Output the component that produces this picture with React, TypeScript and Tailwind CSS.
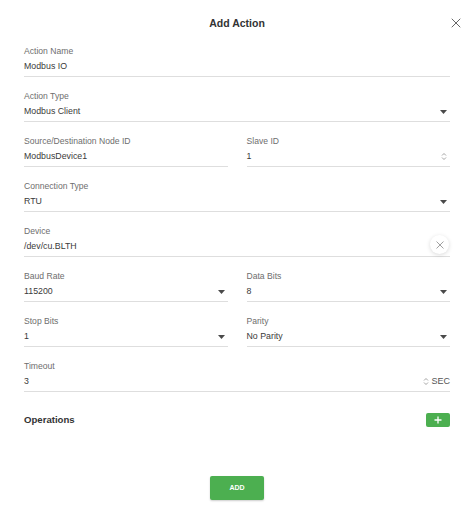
import React from 'react'

const Caret = () => (
	<svg width="7" height="4" viewBox="0 0 7 4" className="shrink-0">
		<path d="M0 0 L7 0 L3.5 4 Z" fill="#4a4a4a" />
	</svg>
)

const Spinner = () => (
	<svg width="6" height="9" viewBox="0 0 6 9" className="shrink-0">
		<path d="M1 3.5 L3 1.5 L5 3.5" stroke="#9a9a9a" strokeWidth="0.9" fill="none" />
		<path d="M1 5.5 L3 7.5 L5 5.5" stroke="#9a9a9a" strokeWidth="0.9" fill="none" />
	</svg>
)

const XIcon = ({ size, color, width }: { size: number; color: string; width: number }) => (
	<svg width={size} height={size} viewBox="0 0 10 10">
		<path d="M1 1 L9 9 M9 1 L1 9" stroke={color} strokeWidth={width} strokeLinecap="round" />
	</svg>
)

interface FieldProps {
	label: string
	value: string
	right?: React.ReactNode
}

const Field = ({ label, value, right }: FieldProps) => (
	<div className="flex flex-col min-w-0">
		<div className="h-[12px] leading-[12px] text-[8.6px] text-[#6e6e6e]">{label}</div>
		<div className="h-[20px] flex items-center justify-between border-b border-[#dedede] pr-[3px]">
			<span className="text-[8.8px] text-[#3a3a3a]">{value}</span>
			{right}
		</div>
	</div>
)

export default function App() {
	return (
		<div
			className="w-[474px] h-[514px] bg-white px-[24px] pt-[16px] relative"
			style={{ fontFamily: '"Liberation Sans", Arial, sans-serif' }}
		>
			<div className="relative mb-[15px]">
				<div className="text-center font-bold text-[10.5px] leading-[14px] text-[#333]">Add Action</div>
				<div className="absolute right-[-11px] top-[2px]">
					<XIcon size={10} color="#666" width={1} />
				</div>
			</div>

			<div className="flex flex-col gap-[13px]">
				<Field label="Action Name" value="Modbus IO" />
				<Field label="Action Type" value="Modbus Client" right={<Caret />} />
				<div className="grid grid-cols-2 gap-[19px]">
					<Field label="Source/Destination Node ID" value="ModbusDevice1" />
					<Field label="Slave ID" value="1" right={<Spinner />} />
				</div>
				<Field label="Connection Type" value="RTU" right={<Caret />} />
				<Field
					label="Device"
					value="/dev/cu.BLTH"
					right={
						<div className="w-[19px] h-[19px] rounded-full bg-white shadow-[0_1px_4px_rgba(0,0,0,0.15)] flex items-center justify-center mr-[-2px] mb-[4px]">
							<XIcon size={8} color="#888" width={1} />
						</div>
					}
				/>
				<div className="grid grid-cols-2 gap-[19px]">
					<Field label="Baud Rate" value="115200" right={<Caret />} />
					<Field label="Data Bits" value="8" right={<Caret />} />
				</div>
				<div className="grid grid-cols-2 gap-[19px]">
					<Field label="Stop Bits" value="1" right={<Caret />} />
					<Field label="Parity" value="No Parity" right={<Caret />} />
				</div>
				<Field
					label="Timeout"
					value="3"
					right={
						<div className="flex items-center gap-[2px] mr-[-3px]">
							<Spinner />
							<span className="text-[9px] text-[#555]">SEC</span>
						</div>
					}
				/>
			</div>

			<div className="flex items-center justify-between mt-[21px]">
				<span className="font-bold text-[9.6px] text-[#333]">Operations</span>
				<button className="w-[24px] h-[14px] rounded-[2px] bg-[#4caf50] flex items-center justify-center">
					<svg width="8" height="8" viewBox="0 0 8 8">
						<path d="M4 0.5 V7.5 M0.5 4 H7.5" stroke="#fff" strokeWidth="1.3" />
					</svg>
				</button>
			</div>

			<div className="flex justify-center mt-[49px]">
				<button className="w-[54px] h-[24px] rounded-[2px] bg-[#4caf50] shadow-[0_1px_2px_rgba(0,0,0,0.2)] text-white text-[7px] font-bold">
					ADD
				</button>
			</div>
		</div>
	)
}
